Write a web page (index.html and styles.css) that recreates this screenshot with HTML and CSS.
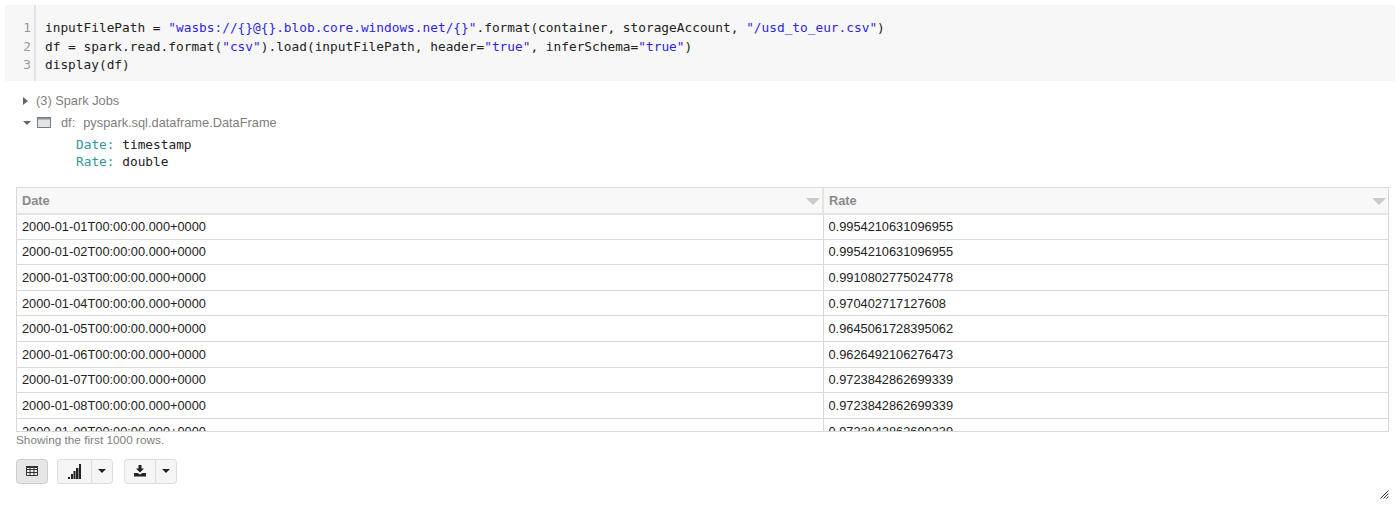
FILE: index.html
```html
<!DOCTYPE html>
<html lang="en">
<head>
    <meta charset="UTF-8">
    <meta name="viewport" content="width=device-width, initial-scale=1.0">
    <title>Notebook cell</title>
    <link rel="stylesheet" href="styles.css">
</head>
<body>
    <div class="code-cell">
        <div class="gutter">
            <div>1</div>
            <div>2</div>
            <div>3</div>
        </div>
        <pre class="code">inputFilePath = <span class="str">"wasbs://{}@{}.blob.core.windows.net/{}"</span>.format(container, storageAccount, <span class="str">"/usd_to_eur.csv"</span>)
df = spark.read.format(<span class="str">"csv"</span>).load(inputFilePath, header=<span class="str">"true"</span>, inferSchema=<span class="str">"true"</span>)
display(df)</pre>
    </div>

    <div class="output">
        <div class="jobs">
            <span class="arrow-right"></span>
            <span>(3) Spark Jobs</span>
        </div>
        <div class="df-line">
            <span class="arrow-down"></span>
            <svg class="df-icon" width="14" height="11" viewBox="0 0 14 11">
                <rect x="0.5" y="0.5" width="13" height="10" fill="#e4e4e4" stroke="#6f7f88"/>
                <rect x="1" y="1" width="12" height="1.500" fill="#8a969c"/>
            </svg>
            <span class="df-name">df:</span>
            <span>pyspark.sql.dataframe.DataFrame</span>
        </div>
        <div class="schema">
            <div><span class="field">Date:</span> timestamp</div>
            <div><span class="field">Rate:</span> double</div>
        </div>
    </div>

    <div class="table-wrap">
        <table>
            <thead>
                <tr>
                    <th class="col-date">Date<span class="sort"></span></th>
                    <th>Rate<span class="sort"></span></th>
                </tr>
            </thead>
            <tbody>
                <tr><td>2000-01-01T00:00:00.000+0000</td><td>0.9954210631096955</td></tr>
                <tr><td>2000-01-02T00:00:00.000+0000</td><td>0.9954210631096955</td></tr>
                <tr><td>2000-01-03T00:00:00.000+0000</td><td>0.9910802775024778</td></tr>
                <tr><td>2000-01-04T00:00:00.000+0000</td><td>0.970402717127608</td></tr>
                <tr><td>2000-01-05T00:00:00.000+0000</td><td>0.9645061728395062</td></tr>
                <tr><td>2000-01-06T00:00:00.000+0000</td><td>0.9626492106276473</td></tr>
                <tr><td>2000-01-07T00:00:00.000+0000</td><td>0.9723842862699339</td></tr>
                <tr><td>2000-01-08T00:00:00.000+0000</td><td>0.9723842862699339</td></tr>
                <tr><td>2000-01-09T00:00:00.000+0000</td><td>0.9723842862699339</td></tr>
            </tbody>
        </table>
    </div>
    <div class="row-note">Showing the first 1000 rows.</div>

    <div class="toolbar">
        <button class="btn active" aria-label="Table">
            <svg width="12" height="10" viewBox="0 0 12 10">
                <path d="M0.500 0.500h11v9h-11z M0.500 3.500h11 M0.500 6.500h11 M4 0.500v9 M8 0.500v9" fill="#f4f0e8" stroke="#333"/>
                <rect x="0" y="0" width="12" height="2" fill="#333"/>
            </svg>
        </button>
        <div class="btn-group">
            <button class="btn chart" aria-label="Chart">
                <svg width="13" height="15" viewBox="0 0 13 15">
                    <path d="M0 13h2v2H0z M3 10h2v5H3z M5.500 7h2v8h-2z M8 4h2.500v11H8z M11 0h2v15h-2z" fill="#222"/>
                </svg>
            </button>
            <button class="btn caret-btn" aria-label="Chart options"><span class="caret"></span></button>
        </div>
        <div class="btn-group">
            <button class="btn download" aria-label="Download">
                <svg width="12" height="12" viewBox="0 0 12 12">
                    <path d="M4.500 0h3v3.500H10L6 7.500 2 3.500h2.500z M0 8h3.500L6 9.500 8.500 8H12v3.500H0z" fill="#222"/>
                </svg>
            </button>
            <button class="btn caret-btn" aria-label="Download options"><span class="caret"></span></button>
        </div>
    </div>

    <div class="resize-row">
        <svg width="9" height="9" viewBox="0 0 9 9">
            <path d="M0.500 8.500L8.500 0.500 M3.500 8.500L8.500 3.500 M6.500 8.500L8.500 6.500" stroke="#333" fill="none"/>
        </svg>
    </div>
</body>
</html>
```

FILE: styles.css
```css
:root {
    --border-color: #d8d8d8;
    --muted-text: #808080;
    --string-color: #2f1fe0;
}
body {
    margin: 0;
    padding: 5px 5px 0;
    background-color: #fff;
    color: #222;
    font-family: "Liberation Sans", Arial, sans-serif;
    font-size: 12.8px;
}
.code-cell {
    display: flex;
    height: 76px;
    background-color: #f7f7f7;
    font-family: "DejaVu Sans Mono", monospace;
    font-size: 12.8px;
    line-height: 18.6px;
}
.gutter {
    width: 29px;
    padding: 14px 0 0;
    border-right: 2px solid #e4e4e4;
    color: #999;
    text-align: right;
}
.gutter div {
    padding-right: 3px;
}
.code {
    margin: 0;
    padding: 14px 0 0 9px;
    font: inherit;
    color: #222;
}
.str {
    color: var(--string-color);
}
.output {
    padding: 9.500px 0 0 18px;
    color: var(--muted-text);
    line-height: 16px;
}
.jobs,
.df-line {
    display: flex;
    align-items: center;
    height: 21.500px;
}
.arrow-right {
    width: 0;
    height: 0;
    margin-right: 8px;
    border-left: 5px solid #666;
    border-top: 4px solid transparent;
    border-bottom: 4px solid transparent;
}
.arrow-down {
    width: 0;
    height: 0;
    margin-right: 6px;
    border-top: 4px solid #666;
    border-left: 4px solid transparent;
    border-right: 4px solid transparent;
}
.df-icon {
    margin-right: 10px;
}
.df-name {
    margin-right: 8px;
}
.schema {
    margin-top: 2px;
    padding-left: 53px;
    color: #222;
    font-family: "DejaVu Sans Mono", monospace;
    font-size: 12.8px;
    line-height: 17.500px;
}
.field {
    color: #2f96a0;
}
.table-wrap {
    height: 243px;
    margin: 16px 6px 0 11px;
    border: 1px solid var(--border-color);
    overflow: hidden;
}
table {
    width: 100%;
    border-collapse: collapse;
    table-layout: fixed;
}
th,
td {
    padding: 0 5px;
    height: 25.6px;
    box-sizing: border-box;
    border-right: 1px solid var(--border-color);
    border-bottom: 1px solid var(--border-color);
    text-align: left;
    font-weight: normal;
    white-space: nowrap;
}
th {
    position: relative;
    height: 26px;
    background-color: #f8f8f8;
    border-bottom-width: 2px;
    border-bottom-color: #e4e4e4;
    border-right-width: 2px;
    border-right-color: #e4e4e4;
    color: #8a8a8a;
    font-weight: bold;
}
th:last-child,
td:last-child {
    border-right: none;
}
.col-date {
    width: 806px;
}
.sort {
    position: absolute;
    top: 10px;
    right: 2px;
    width: 0;
    height: 0;
    border-top: 7px solid #ccc;
    border-left: 7px solid transparent;
    border-right: 7px solid transparent;
}
.row-note {
    margin: 1px 0 0 11px;
    color: var(--muted-text);
    font-size: 11.800px;
    line-height: 15px;
}
.toolbar {
    display: flex;
    gap: 9px;
    margin: 11px 0 0 11px;
}
.btn-group {
    display: flex;
}
.btn-group + .btn-group {
    margin-left: 2px;
}
.btn {
    display: flex;
    align-items: center;
    justify-content: center;
    height: 25px;
    padding: 0;
    border: 1px solid #ddd;
    border-radius: 4px;
    background-color: #f5f5f5;
}
.btn.active {
    width: 32px;
    background-color: #e6e6e6;
    border-color: #ccc;
}
.chart,
.download {
    border-right: none;
    border-radius: 4px 0 0 4px;
}
.chart {
    width: 34px;
}
.download {
    width: 31px;
}
.caret-btn {
    width: 22px;
    border-radius: 0 4px 4px 0;
}
.caret {
    width: 0;
    height: 0;
    border-top: 4px solid #222;
    border-left: 4px solid transparent;
    border-right: 4px solid transparent;
}
.resize-row {
    display: flex;
    justify-content: flex-end;
    margin: 6px 6px 0 0;
}
```
